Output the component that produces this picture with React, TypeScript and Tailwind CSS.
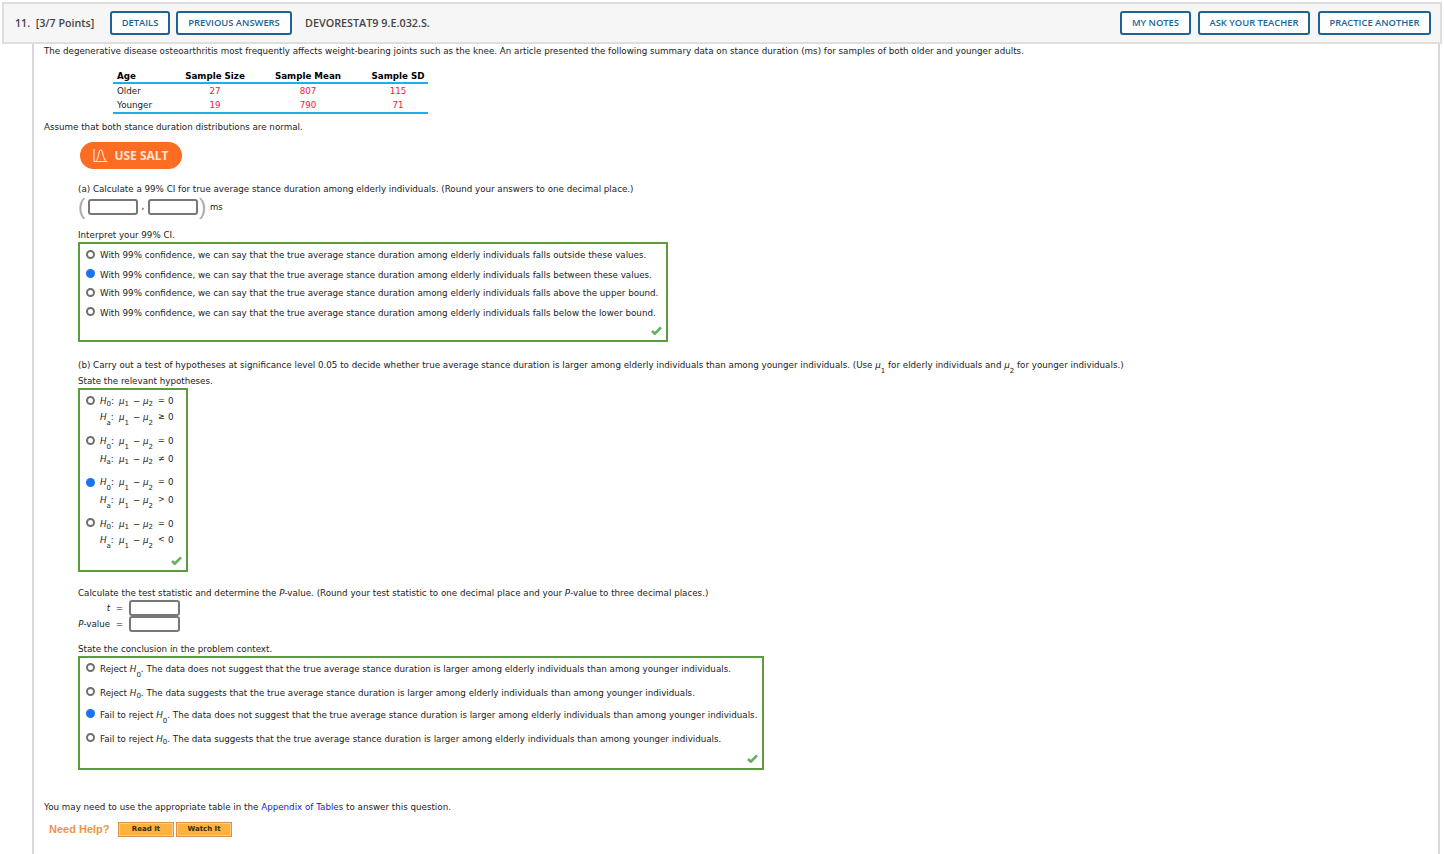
import type { ReactNode } from "react"

const body = "font-['DejaVu_Sans',Verdana,sans-serif] text-[8.72px] text-[#222]"

const headerBtn =
  "flex h-6 items-center justify-center rounded-[3px] border-2 border-[#1b6595] bg-white text-[9.4px] font-semibold text-[#1b6595]"

function Line({ children, className = "" }: { children: ReactNode; className?: string }) {
  return <p className={`h-[14px] whitespace-nowrap leading-[14px] ${className}`}>{children}</p>
}

function Radio({ on = false }: { on?: boolean }) {
  return on ? (
    <span className="block h-[9px] w-[9px] shrink-0 rounded-full bg-[#1a73f0]" />
  ) : (
    <span className="block h-[9px] w-[9px] shrink-0 rounded-full border-2 border-[#6f6f6f] bg-white" />
  )
}

function Check() {
  return (
    <svg width="11" height="9" viewBox="0 0 12 10" className="absolute bottom-[5px] right-[4px]">
      <path d="M1 5.5 L4.2 8.5 L11 1.5" fill="none" stroke="#64b25f" strokeWidth="3" />
    </svg>
  )
}

function H({ sub, drop = false }: { sub: string; drop?: boolean }) {
  return (
    <span className="inline-flex items-start">
      <i>H</i>
      <span className={`text-[7px] not-italic leading-[7px] ${drop ? "mt-[10px]" : "mt-[7px]"}`}>{sub}</span>
    </span>
  )
}

function Mu({ n, drop = false }: { n: string; drop?: boolean }) {
  return (
    <span className="inline-flex items-start">
      <i>μ</i>
      <span className={`text-[7px] leading-[7px] ${drop ? "mt-[10px]" : "mt-[7px]"}`}>{n}</span>
    </span>
  )
}

function Hyp({ sub, sign, drop = false }: { sub: string; sign: string; drop?: boolean }) {
  return (
    <div className="flex h-[14px] items-start whitespace-nowrap leading-[14px]">
      <span className="flex w-[19px]">
        <H sub={sub} drop={drop} />
        <span>:</span>
      </span>
      <span className="w-[14px]">
        <Mu n="1" drop={drop} />
      </span>
      <span className="w-[10px]">−</span>
      <span className="w-[15px]">
        <Mu n="2" drop={drop} />
      </span>
      <span className="w-[10px] text-[8px]">{sign}</span>
      <span>0</span>
    </div>
  )
}

const ciOptions = [
  { text: "falls outside these values.", on: false, cls: "mt-[4px]", radio: "mt-[2px]" },
  { text: "falls between these values.", on: true, cls: "mt-[6px]", radio: "mt-[1px]" },
  { text: "falls above the upper bound.", on: false, cls: "mt-[4px]", radio: "mt-[2px]" },
  { text: "falls below the lower bound.", on: false, cls: "mt-[6px]", radio: "mt-[1px]" },
]

const hypotheses = [
  { sign: "≥", on: false, cls: "mt-[4px]", gap: "gap-[2px]", drop0: false, dropA: true, radio: "mt-[2px]" },
  { sign: "≠", on: false, cls: "mt-[10px]", gap: "gap-[4px]", drop0: true, dropA: false, radio: "mt-[2px]" },
  { sign: ">", on: true, cls: "mt-[9px]", gap: "gap-[4px]", drop0: true, dropA: true, radio: "mt-[3px]" },
  { sign: "<", on: false, cls: "mt-[10px]", gap: "gap-[2px]", drop0: false, dropA: true, radio: "mt-[1px]" },
]

const conclusions = [
  { lead: "Reject", text: "The data does not suggest that the true average stance duration is larger among elderly individuals than among younger individuals.", on: false, drop: true, cls: "mt-[4px]" },
  { lead: "Reject", text: "The data suggests that the true average stance duration is larger among elderly individuals than among younger individuals.", on: false, drop: false, cls: "mt-[10px]" },
  { lead: "Fail to reject", text: "The data does not suggest that the true average stance duration is larger among elderly individuals than among younger individuals.", on: true, drop: true, cls: "mt-[8px]" },
  { lead: "Fail to reject", text: "The data suggests that the true average stance duration is larger among elderly individuals than among younger individuals.", on: false, drop: false, cls: "mt-[10px]" },
]

const tableRows = [
  { age: "Older", n: "27", mean: "807", sd: "115" },
  { age: "Younger", n: "19", mean: "790", sd: "71" },
]

const gridCols = "grid grid-cols-[72px_60px_126px_54px] items-center whitespace-nowrap"

export default function App() {
  return (
    <div className={`h-[854px] w-[1444px] overflow-hidden bg-white ${body}`}>
      <header className="ml-[2px] mr-[2px] mt-[2px] flex h-[42px] items-center justify-between border-[2px] border-[#dedede] bg-[#f6f6f6] pl-[11px] pr-[9px] font-['Open_Sans',sans-serif]">
        <div className="flex items-center">
          <span className="w-[95px] text-[10.7px] font-semibold text-[#444]">11.&nbsp; [3/7 Points]</span>
          <button className={`${headerBtn} w-[60px]`}>DETAILS</button>
          <button className={`${headerBtn} ml-[6px] w-[116px]`}>PREVIOUS ANSWERS</button>
          <span className="ml-[13px] text-[10.8px] font-semibold text-[#444]">DEVORESTAT9 9.E.032.S.</span>
        </div>
        <div className="flex items-center gap-[7px]">
          <button className={`${headerBtn} w-[71px]`}>MY NOTES</button>
          <button className={`${headerBtn} w-[112px]`}>ASK YOUR TEACHER</button>
          <button className={`${headerBtn} ml-[1px] w-[113px]`}>PRACTICE ANOTHER</button>
        </div>
      </header>

      <main className="ml-[32px] mr-[4px] h-[810px] border-x-2 border-[#d8d8d8] pl-[10px]">
        <Line>
          The degenerative disease osteoarthritis most frequently affects weight-bearing joints such as the knee. An article presented the following summary data on stance duration (ms) for samples of both older and younger adults.
        </Line>

        <div className="ml-[69px] mt-[10px] w-[315px]">
          <div className={`${gridCols} h-[14px] pt-[2px] font-bold text-black`}>
            <span className="pl-[4px]">Age</span>
            <span className="text-center">Sample Size</span>
            <span className="text-center">Sample Mean</span>
            <span className="text-center">Sample SD</span>
          </div>
          <div className="border-y-2 border-[#1fafe6]">
            {tableRows.map((r) => (
              <div key={r.age} className={`${gridCols} h-[14px] pt-[1px]`}>
                <span className="pl-[4px]">{r.age}</span>
                <span className="text-center text-[#f2203c]">{r.n}</span>
                <span className="text-center text-[#f2203c]">{r.mean}</span>
                <span className="text-center text-[#f2203c]">{r.sd}</span>
              </div>
            ))}
          </div>
        </div>

        <Line className="mt-[6px]">Assume that both stance duration distributions are normal.</Line>

        <button className="ml-[36px] mt-[8px] flex h-[27px] w-[102px] items-center justify-center gap-[6px] rounded-full bg-[#fc6c23] font-['Open_Sans',sans-serif] text-[12px] font-bold text-[#fde3d3]">
          <svg width="15" height="15" viewBox="0 0 15 15" fill="none" stroke="#fde3d3" strokeWidth="1.2">
            <path d="M1 1 V13.5 H14.5" />
            <path d="M3 12.5 C6 12 5 2 7.8 2 C10.5 2 9.5 12 13 12.5" />
          </svg>
          USE SALT
        </button>

        <div className="ml-[34px]">
          <Line className="mt-[13px]">
            (a) Calculate a 99% CI for true average stance duration among elderly individuals. (Round your answers to one decimal place.)
          </Line>
          <div className="mt-[1px] flex h-[20px] items-center">
            <span className="w-[10px] font-['Liberation_Sans',sans-serif] text-[22px] font-light leading-[20px] text-[#aaa]">(</span>
            <input className="h-[16px] w-[50px] rounded-[3px] border-2 border-[#777]" />
            <span className="w-[10px] text-center">,</span>
            <input className="h-[16px] w-[50px] rounded-[3px] border-2 border-[#777]" />
            <span className="ml-[1px] w-[11px] font-['Liberation_Sans',sans-serif] text-[22px] font-light leading-[20px] text-[#aaa]">)</span>
            <span className="text-[8.5px]">ms</span>
          </div>

          <Line className="mt-[11px]">Interpret your 99% CI.</Line>
          <div className="relative h-[100px] w-[590px] border-2 border-[#5c9c3c]">
            {ciOptions.map((o) => (
              <div key={o.text} className={`flex h-[14px] items-start gap-[5px] whitespace-nowrap pl-[6px] leading-[14px] ${o.cls}`}>
                <span className={o.radio}>
                  <Radio on={o.on} />
                </span>
                <span>With 99% confidence, we can say that the true average stance duration among elderly individuals {o.text}</span>
              </div>
            ))}
            <Check />
          </div>

          <div className="mt-[16px] flex h-[14px] items-start whitespace-nowrap leading-[14px]">
            (b) Carry out a test of hypotheses at significance level 0.05 to decide whether true average stance duration is larger among elderly individuals than among younger individuals. (Use&nbsp;
            <Mu n="1" drop />
            &nbsp;for elderly individuals and&nbsp;
            <Mu n="2" drop />
            &nbsp;for younger individuals.)
          </div>
          <Line className="mt-[2px]">State the relevant hypotheses.</Line>

          <div className="relative h-[184px] w-[110px] border-2 border-[#5c9c3c]">
            {hypotheses.map((h) => (
              <div key={h.sign} className={`flex items-start gap-[5px] pl-[6px] ${h.cls}`}>
                <span className={h.radio}>
                  <Radio on={h.on} />
                </span>
                <div className={`flex flex-col ${h.gap}`}>
                  <Hyp sub="0" sign="=" drop={h.drop0} />
                  <Hyp sub="a" sign={h.sign} drop={h.dropA} />
                </div>
              </div>
            ))}
            <Check />
          </div>

          <Line className="mt-[14px]">
            Calculate the test statistic and determine the <i>P</i>-value. (Round your test statistic to one decimal place and your <i>P</i>-value to three decimal places.)
          </Line>
          <div className="grid w-[102px] grid-cols-[51px_51px] items-center whitespace-nowrap">
            <span className="h-[16px] pr-[6px] text-right leading-[16px]"><i>t</i>&nbsp; =</span>
            <input className="h-[16px] w-[51px] rounded-[3px] border-2 border-[#777]" />
            <span className="h-[16px] pr-[6px] text-right leading-[16px]"><i>P</i>-value&nbsp; =</span>
            <input className="h-[16px] w-[51px] rounded-[3px] border-2 border-[#777]" />
          </div>

          <Line className="mt-[10px]">State the conclusion in the problem context.</Line>
          <div className="relative h-[114px] w-[686px] border-2 border-[#5c9c3c]">
            {conclusions.map((c) => (
              <div key={c.lead + c.text} className={`flex h-[14px] items-start gap-[5px] whitespace-nowrap pl-[6px] leading-[14px] ${c.cls}`}>
                <span className="mt-[1px]">
                  <Radio on={c.on} />
                </span>
                <span className="flex items-start">
                  {c.lead}&nbsp;
                  <H sub="0" drop={c.drop} />
                  .&nbsp;{c.text}
                </span>
              </div>
            ))}
            <Check />
          </div>
        </div>

        <Line className="mt-[30px]">
          You may need to use the appropriate table in the <a className="text-[#1a1ac8]">Appendix of Tables</a> to answer this question.
        </Line>
        <div className="ml-[5px] mt-[8px] flex h-[14px] items-center">
          <span className="w-[69px] font-['Liberation_Sans',sans-serif] text-[11px] font-bold text-[#f29345]">Need Help?</span>
          <button className="h-[15px] w-[56px] border border-[#dc9148] bg-[#fdb33d] text-[7px] font-bold leading-[13px] text-[#3a2a10] shadow-[inset_0_0_0_1px_#f7cd97]">Read It</button>
          <button className="ml-[2px] h-[15px] w-[56px] border border-[#dc9148] bg-[#fdb33d] text-[7px] font-bold leading-[13px] text-[#3a2a10] shadow-[inset_0_0_0_1px_#f7cd97]">Watch It</button>
        </div>
      </main>
    </div>
  )
}
